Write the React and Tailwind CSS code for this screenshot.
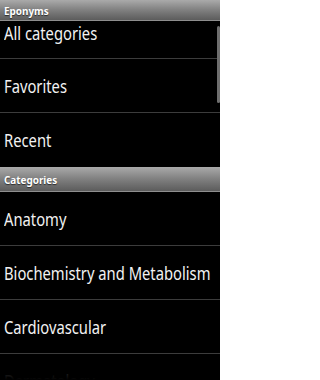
const sections = [
  { title: 'Eponyms', items: ['All categories', 'Favorites', 'Recent'] },
  { title: 'Categories', items: ['Anatomy', 'Biochemistry and Metabolism', 'Cardiovascular', 'Dermatology'] },
];

function SectionHeader({ title, first }) {
  return (
    <div
      className={`${first ? 'h-[21px]' : 'h-[25px]'} flex items-center px-[4px] bg-gradient-to-b from-[#aaaaaa] via-[#808080] to-[#5c5c5c] border-b border-[#8e8e8e]`}
    >
      <span className="text-[11px] font-bold text-white leading-none whitespace-nowrap scale-x-[0.9] origin-left [text-shadow:0_1px_1px_rgba(0,0,0,0.6)]">
        {title}
      </span>
    </div>
  );
}

function Row({ label, top, divider }) {
  return (
    <div
      className={`${top ? 'h-[38px] pb-[14px]' : 'h-[54px]'} flex items-center px-[4px] ${divider ? 'border-b border-[#3c3c3c]' : ''}`}
    >
      <span className="text-[18px] text-[#f2f2f2] whitespace-nowrap leading-none scale-x-[0.82] origin-left">
        {label}
      </span>
    </div>
  );
}

export default function App() {
  return (
    <div
      className="relative w-[220px] h-[380px] overflow-hidden bg-black"
      style={{ fontFamily: '"Noto Sans", "Open Sans", sans-serif' }}
    >
      {sections.map((s, si) => (
        <div key={s.title}>
          <SectionHeader title={s.title} first={si === 0} />
          {s.items.map((it, i) => (
            <Row
              key={it}
              label={it}
              top={si === 0 && i === 0}
              divider={!(si === 0 && i === s.items.length - 1)}
            />
          ))}
        </div>
      ))}
      {/* scrollbar */}
      <div className="absolute right-0 top-[26px] w-[3px] h-[77px] rounded-sm bg-[#6e6e6e]" />
      {/* fading edge */}
      <div className="absolute left-0 right-0 bottom-0 h-[22px] bg-gradient-to-b from-transparent via-black/80 to-black" />
    </div>
  );
}
